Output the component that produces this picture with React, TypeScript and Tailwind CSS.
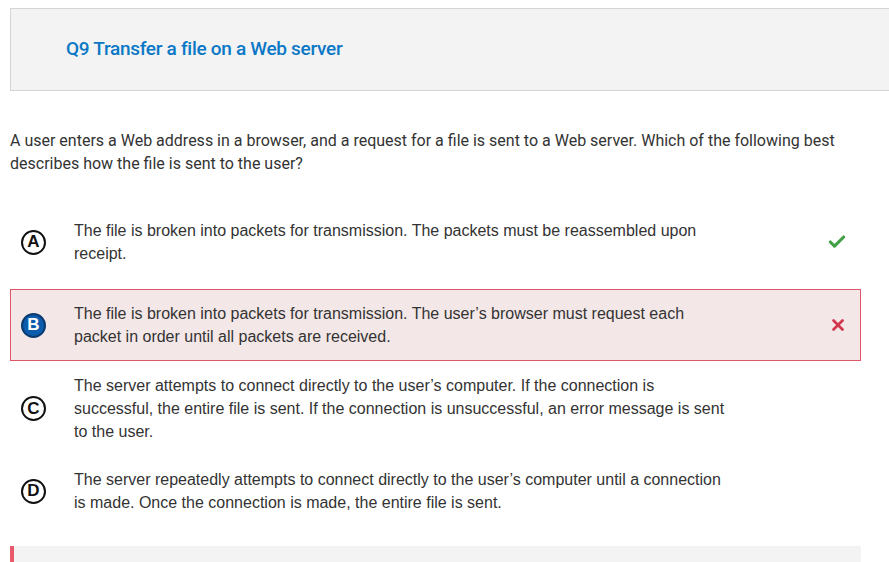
import { Check, X } from 'lucide-react';

type Option = {
  letter: string;
  text: string;
  state?: 'correct' | 'wrong';
  selected?: boolean;
  extra?: string;
};

const options: Option[] = [
  {
    letter: 'A',
    text: 'The file is broken into packets for transmission. The packets must be reassembled upon receipt.',
    state: 'correct',
    extra: 'mb-[11px]',
  },
  {
    letter: 'B',
    text: 'The file is broken into packets for transmission. The user\u2019s browser must request each packet in order until all packets are received.',
    state: 'wrong',
    selected: true,
  },
  {
    letter: 'C',
    text: 'The server attempts to connect directly to the user\u2019s computer. If the connection is successful, the entire file is sent. If the connection is unsuccessful, an error message is sent to the user.',
  },
  {
    letter: 'D',
    text: 'The server repeatedly attempts to connect directly to the user\u2019s computer until a connection is made. Once the connection is made, the entire file is sent.',
    extra: '-mt-[1px]',
  },
];

function LetterBadge({ letter, selected }: { letter: string; selected?: boolean }) {
  return (
    <div
      className={
        selected
          ? 'w-[25px] h-[25px] rounded-full border-2 border-[#0a3a6e] bg-[#0b5cad] text-white flex items-center justify-center text-[17px] font-bold'
          : 'w-[25px] h-[25px] rounded-full border-2 border-[#111] bg-white text-[#111] flex items-center justify-center text-[17px] font-bold'
      }
      style={{ fontFamily: '"Liberation Sans", Arial, sans-serif' }}
    >
      {letter}
    </div>
  );
}

export default function App() {
  return (
    <div className="w-[889px] h-[562px] overflow-hidden bg-white" style={{ fontFamily: 'Roboto, "Liberation Sans", sans-serif' }}>
      <div className="pt-[8px] pl-[10px]">
        <header className="w-[900px] h-[83px] bg-[#f3f3f3] border border-[#d5d5d5] flex items-center pl-[55px]">
          <h1 className="text-[19px] font-medium text-[#0a78c6] tracking-[-0.3px]">Q9 Transfer a file on a Web server</h1>
        </header>
      </div>

      <div className="pl-[10px] w-[861px]">
        <p className="mt-[38px] text-[16px] leading-[23px] text-[#333]">
          A user enters a Web address in a browser, and a request for a file is sent to a Web server. Which of the following best describes how the file is sent to the user?
        </p>

        <div className="mt-[31px] flex flex-col" style={{ fontFamily: '"Liberation Sans", Arial, sans-serif' }}>
          {options.map((o) => (
            <div
              key={o.letter}
              className={
                'flex items-center py-[12px] border ' +
                (o.selected ? 'border-[#e05567] bg-[#f4e7e7] ' : 'border-transparent ') +
                (o.extra ?? '')
              }
            >
              <div className="pl-[10px] pr-[28px]">
                <LetterBadge letter={o.letter} selected={o.selected} />
              </div>
              <div className="w-[660px] text-[16px] leading-[23px] text-[#333]">{o.text}</div>
              <div className="flex-1 flex justify-end pr-[13px]">
                {o.state === 'correct' && <Check size={20} strokeWidth={3.8} className="text-[#43a047]" />}
                {o.state === 'wrong' && <X size={18} strokeWidth={3.6} className="text-[#d2364b]" />}
              </div>
            </div>
          ))}
        </div>

        <div className="mt-[19px] h-[20px] bg-[#f3f3f3] border-l-4 border-[#e85a6b]" />
      </div>
    </div>
  );
}
